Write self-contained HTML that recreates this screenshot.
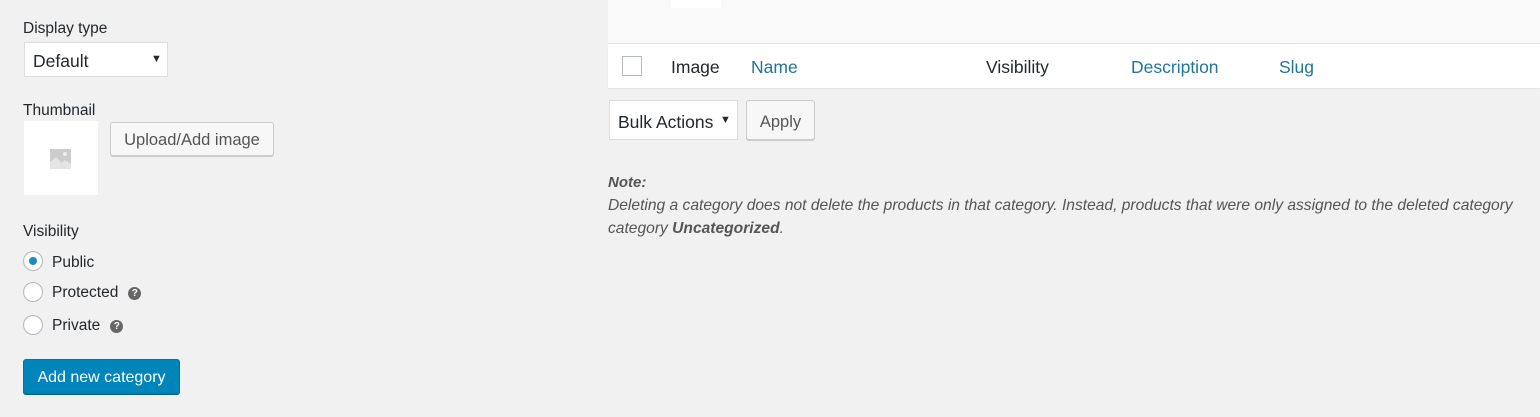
<!DOCTYPE html>
<html><head><style>
body{margin:0;width:1540px;height:417px;background:#f1f1f1;font-family:"Liberation Sans",sans-serif;color:#23282d;position:relative;overflow:hidden;font-size:15.5px}
.a{position:absolute;white-space:nowrap}
.btn{position:absolute;background:#f7f7f7;border:1px solid #ccc;border-radius:3px;box-shadow:0 1px 0 #ccc;color:#555;box-sizing:border-box;text-align:center}
.sel{position:absolute;background:#fff;border:1px solid #ddd;box-sizing:border-box}
.radio{position:absolute;width:20px;height:20px;border:1px solid #b4b9be;border-radius:50%;background:#fff;box-sizing:border-box;box-shadow:inset 0 1px 2px rgba(0,0,0,.07)}
.q{display:inline-block;width:13px;height:13px;border-radius:50%;background:#666;color:#fff;font-size:10px;font-weight:bold;text-align:center;line-height:13px;vertical-align:1px;margin-left:10px}
.link{color:#21759b}
</style></head><body>
<div class="a" style="left:23px;top:20px">Display type</div>
<div class="sel" style="left:24px;top:42px;width:144px;height:35px"><span class="a" style="left:8px;top:8px;font-size:17.5px">Default</span><span class="a" style="left:126px;top:10px;font-size:11px">▼</span></div>
<div class="a" style="left:23px;top:102px">Thumbnail</div>
<div style="position:absolute;left:24px;top:121px;width:74px;height:74px;background:#fff"></div>
<svg style="position:absolute;left:50px;top:149px" width="21" height="20" viewBox="0 0 21 20"><rect x="0" y="0" width="21" height="20" fill="#ccc"/><path d="M0 20L0 13L6 8L12 14L15 11L21 15L21 20Z" fill="#e4e4e4"/><circle cx="15" cy="5" r="2" fill="#eee"/></svg>
<div class="btn" style="left:110px;top:122px;width:164px;height:34px;line-height:34px;font-size:16.5px">Upload/Add image</div>
<div class="a" style="left:23px;top:223px">Visibility</div>
<div class="radio" style="left:23px;top:251px"><div style="position:absolute;left:5px;top:5px;width:8px;height:8px;border-radius:50%;background:#1e8cbe"></div></div>
<div class="a" style="left:52px;top:254px">Public</div>
<div class="radio" style="left:23px;top:282px"></div>
<div class="a" style="left:52px;top:284px">Protected<span class="q">?</span></div>
<div class="radio" style="left:23px;top:315px"></div>
<div class="a" style="left:52px;top:317px">Private<span class="q">?</span></div>
<div style="position:absolute;left:23px;top:359px;width:157px;height:35px;background:#0085ba;border:1px solid #0073aa;border-radius:3px;box-sizing:border-box;box-shadow:0 1px 0 #006799;color:#fff;font-size:16px;text-align:center;line-height:36px">Add new category</div>

<div style="position:absolute;left:608px;top:0;width:932px;height:43px;background:#f9f9f9"></div>
<div style="position:absolute;left:671px;top:0;width:50px;height:8px;background:#fff"></div>
<div style="position:absolute;left:608px;top:43px;width:932px;height:1px;background:#e1e1e1"></div>
<div style="position:absolute;left:608px;top:44px;width:932px;height:44px;background:#fff;box-shadow:0 1px 1px rgba(0,0,0,.06)"></div>
<div style="position:absolute;left:622px;top:56px;width:20px;height:20px;border:1px solid #b4b9be;box-sizing:border-box;background:#fff"></div>
<div class="a" style="left:671px;top:57px;font-size:17.5px">Image</div>
<div class="a link" style="left:751px;top:57px;font-size:17.5px">Name</div>
<div class="a" style="left:986px;top:57px;font-size:17.5px">Visibility</div>
<div class="a link" style="left:1131px;top:57px;font-size:17.5px">Description</div>
<div class="a link" style="left:1279px;top:57px;font-size:17.5px">Slug</div>
<div class="sel" style="left:609px;top:100px;width:129px;height:40px"><span class="a" style="left:8px;top:11px;font-size:17.5px">Bulk Actions</span><span class="a" style="left:110px;top:13px;font-size:11px">▼</span></div>
<div class="btn" style="left:746px;top:100px;width:69px;height:40px;line-height:42px;font-size:16.5px">Apply</div>
<div class="a" style="left:608px;top:174px;font-style:italic;font-weight:bold;color:#555;font-size:15px">Note:</div>
<div class="a" style="left:608px;top:197px;font-style:italic;color:#555;font-size:15.6px">Deleting a category does not delete the products in that category. Instead, products that were only assigned to the deleted category</div>
<div class="a" style="left:608px;top:220px;font-style:italic;color:#555;font-size:15.6px">category <b>Uncategorized</b>.</div>
</body></html>
